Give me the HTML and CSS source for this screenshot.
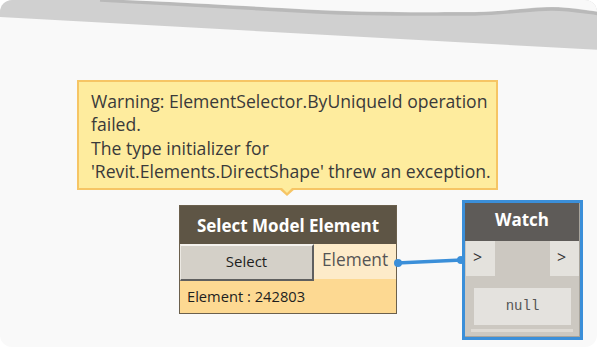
FILE: index.html
```html
<!doctype html>
<html lang="en">
<head>
  <meta charset="utf-8">
  <title>Select Model Element</title>
  <meta name="viewport" content="width=device-width, initial-scale=1">
  <link rel="stylesheet" href="styles.css">
</head>

<body>

  <div class="canvas">

    <!-- node above, cut off by the view -->
    <svg class="offscreen" width="601" height="52" viewBox="0 0 601 52">
      <polygon points="0,0 601,0 601,50 0,17" fill="#d0d0d0"/>
      <path d="M100,0 C180,4 260,9 318,12 C380,15 440,14 475,14 C510,13 530,9 552,9 C570,9 585,12 601,14"
            fill="none" stroke="#b9b9b9" stroke-width="3.5"/>
      <path d="M98,-1 C180,2 260,7 318,10 C380,13 440,12 475,12 C510,11 530,7 552,7 C570,7 585,10 601,12 L601,-1 Z"
            fill="#f9f9f9"/>
    </svg>

    <div class="warning">
      Warning: ElementSelector.ByUniqueId operation<br>
      failed.<br>
      The type initializer for<br>
      'Revit.Elements.DirectShape' threw an exception.
    </div>

    <div class="node select-node">
      <div class="node-title">Select Model Element</div>
      <div class="node-row">
        <button class="select-btn">Select</button>
        <div class="out-port">Element</div>
      </div>
      <div class="node-value">Element : 242803</div>
    </div>

    <div class="node watch-node">
      <div class="watch-inner">
        <div class="node-title">Watch</div>
        <div class="watch-ports">
          <span class="port">&gt;</span>
          <span class="port">&gt;</span>
        </div>
        <div class="watch-value">null</div>
        <div class="watch-scroll"></div>
      </div>
    </div>

    <svg class="wires" width="601" height="349" viewBox="0 0 601 349">
      <line x1="397" y1="263" x2="462" y2="260" stroke="#3b8fd9" stroke-width="3.5"/>
      <circle cx="398" cy="263" r="4" fill="#3b8fd9"/>
      <circle cx="461" cy="260" r="4" fill="#3b8fd9"/>
    </svg>

  </div>

</body>
</html>
```

FILE: styles.css
```css
body {
  margin:0;
  background:#fff;
  font-family:'Open Sans', 'Noto Sans', sans-serif;
}
.canvas {
  position:relative;
  width:597px;
  height:347px;
  border-radius:12px;
  overflow:hidden;
  background:#f9f9f9;
}
.offscreen,
.wires {
  position:absolute;
  left:0;
  top:0;
}
.wires {
  pointer-events:none;
}

/* warning bubble */
.warning {
  position:absolute;
  left:77px;
  top:80px;
  width:421px;
  height:110px;
  box-sizing:border-box;
  padding:8px 0 0 12px;
  background:#feec9e;
  border:2px solid #f6c565;
  color:#3a3a3a;
  font-size:17.6px;
  line-height:23.3px;
  white-space:nowrap;
}
.warning::before,
.warning::after {
  content:'';
  position:absolute;
  left:200px;
  top:100%;
  border-style:solid;
  border-color:transparent;
}
.warning::before {
  margin-left:-1px;
  border-width:8px 9px 0;
  border-top-color:#f6c565;
}
.warning::after {
  left:201px;
  margin-top:-2px;
  border-width:7px 7px 0;
  border-top-color:#feec9e;
}

/* nodes */
.node {
  position:absolute;
  box-sizing:border-box;
}
.node-title {
  height:38px;
  display:flex;
  align-items:center;
  justify-content:center;
  color:#fff;
  font-weight:700;
  font-size:17px;
}
.select-node {
  left:179px;
  top:205px;
  width:218px;
  height:109px;
  border:1px solid #6b604d;
  background:#fdd992;
}
.select-node .node-title {
  background:#5e5545;
}
.node-row {
  display:flex;
  height:37px;
}
.select-btn {
  width:134px;
  margin:0;
  padding:0 0 4px;
  border:0;
  border-top:2px solid #f4f2ee;
  border-left:1px solid #ece9e3;
  border-right:2px solid #5f5f5f;
  border-bottom:2px solid #5f5f5f;
  background:#d4d0c8;
  font-family:'Open Sans', 'Noto Sans', sans-serif;
  font-size:15px;
  color:#1e1e1e;
}
.out-port {
  flex:1;
  height:35px;
  background:#fdebc9;
  color:#555;
  font-size:17.3px;
  line-height:32px;
  padding-left:8px;
}
.node-value {
  height:33px;
  line-height:31px;
  padding-left:7px;
  font-size:14.7px;
  color:#1e1e1e;
}

.watch-node {
  left:462px;
  top:200px;
  width:121px;
  height:140px;
  border:3px solid #3b8fd9;
}
.watch-inner {
  height:100%;
  box-sizing:border-box;
  background:#ccc8c1;
  border-right:1px solid #a8a49c;
  border-bottom:1px solid #a8a49c;
}
.watch-inner .node-title {
  background:#5e5b58;
  font-size:17px;
  padding-bottom:5px;
  box-sizing:border-box;
}
.watch-ports {
  display:flex;
  justify-content:space-between;
  height:35px;
  padding-left:1px;
}
.port {
  width:29px;
  background:#e4e2dd;
  color:#333;
  font-size:16px;
  line-height:33px;
  padding-left:7px;
  box-sizing:border-box;
}
.watch-value {
  margin:12px 8px 0 9px;
  height:37px;
  background:#e4e2de;
  color:#555;
  font-family:'Liberation Mono', monospace;
  font-size:14px;
  line-height:37px;
  text-align:center;
}
.watch-scroll {
  margin:4px 6px 0;
  height:3px;
  background:#dedad4;
}
```
